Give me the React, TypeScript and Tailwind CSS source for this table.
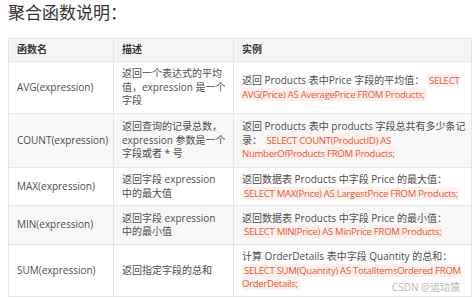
import React from "react";

const Code = ({ children }: { children: React.ReactNode }) => (
  <code className="text-[#f2542d] bg-[#fbf1ee] px-[2px] rounded-[2px] text-[9.6px] tracking-[-0.3px] [font-family:'Open_Sans','Noto_Sans_CJK_SC',sans-serif]">
    {children}
  </code>
);

const rows = [
  {
    name: "AVG(expression)",
    desc: "返回一个表达式的平均值，expression 是一个字段",
    ex: (
      <>
        返回 Products 表中Price 字段的平均值： <Code>SELECT AVG(Price) AS AveragePrice FROM Products;</Code>
      </>
    ),
    h: "h-[52px]",
  },
  {
    name: "COUNT(expression)",
    desc: "返回查询的记录总数，expression 参数是一个字段或者 * 号",
    ex: (
      <>
        返回 Products 表中 products 字段总共有多少条记录： <Code>SELECT COUNT(ProductID) AS NumberOfProducts FROM Products;</Code>
      </>
    ),
    h: "h-[54px]",
  },
  {
    name: "MAX(expression)",
    desc: "返回字段 expression 中的最大值",
    ex: (
      <>
        返回数据表 Products 中字段 Price 的最大值： <Code>SELECT MAX(Price) AS LargestPrice FROM Products;</Code>
      </>
    ),
    h: "h-[38px]",
  },
  {
    name: "MIN(expression)",
    desc: "返回字段 expression 中的最小值",
    ex: (
      <>
        返回数据表 Products 中字段 Price 的最小值： <Code>SELECT MIN(Price) AS MinPrice FROM Products;</Code>
      </>
    ),
    h: "h-[39px]",
  },
  {
    name: "SUM(expression)",
    desc: "返回指定字段的总和",
    ex: (
      <>
        计算 OrderDetails 表中字段 Quantity 的总和： <Code>SELECT SUM(Quantity) AS TotalItemsOrdered FROM OrderDetails;</Code>
      </>
    ),
    h: "h-[52px]",
  },
];

export default function App() {
  return (
    <div className="relative w-[474px] h-[299px] overflow-hidden bg-white [font-family:'Open_Sans','Noto_Sans_CJK_SC',sans-serif] text-[#4d4d4d]">
      <h2 className="pl-[8px] pt-[2px] text-[17px] leading-[22px] text-[#333]">聚合函数说明：</h2>
      <div className="mt-[14px] ml-[8px] w-[464px]">
        <table className="w-full border-collapse text-[10px] leading-[13.5px] table-fixed">
          <colgroup>
            <col className="w-[105px]" />
            <col className="w-[120px]" />
            <col />
          </colgroup>
          <thead>
            <tr className="h-[23px] bg-[#f5f5f5]">
              <th className="border border-[#e6e6e6] text-left font-bold pl-[8px] pr-[5px] text-[#333]">函数名</th>
              <th className="border border-[#e6e6e6] text-left font-bold pl-[8px] pr-[5px] text-[#333]">描述</th>
              <th className="border border-[#e6e6e6] text-left font-bold pl-[8px] pr-[5px] text-[#333]">实例</th>
            </tr>
          </thead>
          <tbody>
            {rows.map((r, i) => (
              <tr key={i} className={`${r.h} ${i % 2 === 1 ? "bg-[#f8f8f8]" : "bg-white"}`}>
                <td className="border border-[#e6e6e6] pl-[8px] pr-[5px] align-middle">{r.name}</td>
                <td className="border border-[#e6e6e6] pl-[8px] pr-[5px] align-middle">{r.desc}</td>
                <td className="border border-[#e6e6e6] pl-[8px] pr-[5px] align-middle">{r.ex}</td>
              </tr>
            ))}
          </tbody>
        </table>
      </div>
      <div className="absolute right-[14px] bottom-[4px] text-[10px] text-[#b8b8b8]">CSDN @运动猿</div>
    </div>
  );
}
